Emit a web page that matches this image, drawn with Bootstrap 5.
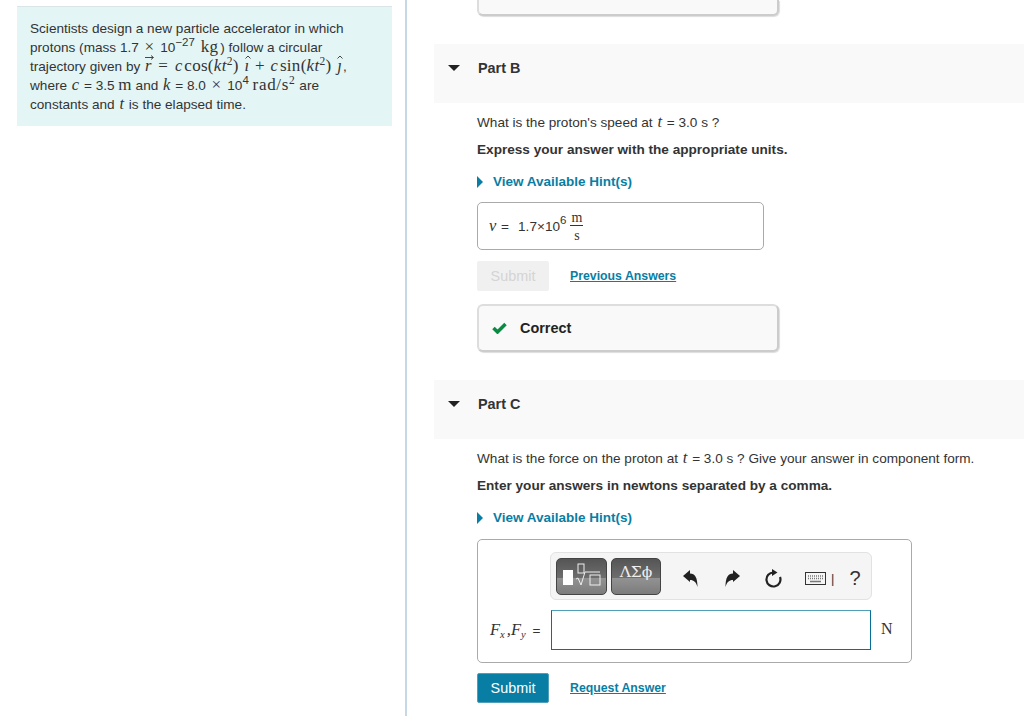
<!doctype html>
<html lang="en">
<head>
<meta charset="utf-8">
<title>Part B and Part C</title>
<link href="https://cdn.jsdelivr.net/npm/bootstrap@5.3.0/dist/css/bootstrap.min.css" rel="stylesheet">
<style>
html,body{height:716px;overflow:hidden}
body{font-family:"Liberation Sans",Arial,sans-serif;font-size:13.6px;line-height:19px;color:#333;background:#fff}
.mth{font-family:"Liberation Serif",serif;font-size:17px;line-height:0;letter-spacing:.3px}
.mi{font-family:"Liberation Serif",serif;font-style:italic;font-size:16.5px;line-height:0;margin:0 1px}
.sup-x{font-size:11.5px;line-height:0;position:relative;top:-6px}
.sub-x{font-size:10.5px;line-height:0;position:relative;top:3px}
.sp-x{margin:0 2px}
.sp-s{margin:0 2px}
.sp-t{margin:0 1px}
.unit-w{letter-spacing:.7px;margin:0}
.shell{height:716px}
.leftcol{width:407px;flex:none;border-right:2px solid #c5d8e8;padding:6px 14px 0 17px}
.intro{background:#e4f5f6;border-top:1px solid #d9e5e6;height:120px;padding:12px 13px;color:#333;width:375px;white-space:nowrap}
.accent-wrap{position:relative;display:inline-block;line-height:0}
.accent-top{position:absolute;left:0;right:0;top:-11px;margin:auto;display:block}
.rightcol{flex:1 1 auto;min-width:0;padding-left:27px}
.feedback{width:302px;background:#f9f9f9;border:2px solid #ddd;border-bottom-color:#ccc;border-right-color:#ccc;box-shadow:1px 1px 1px #ddd;border-radius:6px}
.stub{height:16px;border-top:0;border-top-left-radius:0;border-top-right-radius:0;margin-left:43px}
.parthead{background:#f9f9f9;height:59px;padding:15px 0 0 14px;font-weight:700;font-size:14.4px;color:#333;gap:18px}
.parthead2{margin-top:28px}
.tridown{width:12px;height:6px;flex:none;margin-top:6px}
.partbody{padding-left:43px}
.qtext{margin:10px 0 0;white-space:nowrap}
.qbold{margin:8px 0 0;font-weight:700;white-space:nowrap}
.hintlink{margin-top:13px;gap:10px;color:#087ea4;font-weight:700;font-size:13.5px}
.hintlink svg{flex:none}
.ansbox{width:287px;height:48px;margin-top:11px;border:1px solid #aaa;border-radius:5px;padding:0 10px;gap:9px}
.frac{display:inline-flex;flex-direction:column;align-items:center;font-family:"Liberation Serif",serif;font-size:14px;line-height:11px;margin-left:4px}
.frac b{font-weight:400;border-bottom:1px solid #333;padding:0 1px 2px;display:block}
.frac i{font-style:normal;padding-top:4px;display:block}
.actions{margin-top:11px;gap:21px}
.btn.subbtn{width:72px;height:30px;padding:0;font-size:14.4px;line-height:28px;border-radius:2px;border:1px solid #4f9fba;background:#087ea4;color:#fff;--bs-btn-hover-bg:#087ea4}
.btn.subbtn:disabled{background:#f0f0f0;border-color:#f0f0f0;color:#d4d4d4;opacity:1}
.textlink{color:#087ea4;font-weight:700;font-size:12.3px}
.okbox{height:48px;margin-top:13px;padding:0 13px;gap:13px;font-weight:700;font-size:14.4px;color:#222}
.mqbox{width:435px;height:124px;margin-top:12px;border:1px solid #aaa;border-radius:5px;padding:12px 0 0 11px}
.toolbar{width:322px;height:48px;margin-left:61px;background:#f5f5f5;border:1px solid #e2e2e2;border-radius:6px;padding:0 5px}
.palbtn{height:37px;margin:0;padding:0;border:1px solid #444;border-radius:5px;background:linear-gradient(#555 0,#6e6e6e 55%,#929292 55%,#7c7c7c 100%);color:#eee;display:flex;align-items:center;justify-content:center;flex:none}
.pal1{width:51px;margin-right:4px}
.pal2{width:50px;font-family:"DejaVu Serif",serif;font-size:15.500px;padding-bottom:7px}
.tools{flex:1 1 auto;min-width:0;padding-top:4px}
.tb1{margin-left:22px}.tb2{margin-left:27px}.tb3{margin-left:25px}.tb4{margin-left:23px}
.kbsep{color:#333;font-size:13px;margin-left:5px;line-height:1}
.q-mark{margin-left:15px;font-size:20px;color:#333;line-height:1}
.fieldrow{margin-top:10px;gap:10px}
.fieldlabel{width:52px;flex:none;white-space:nowrap}
.f-gap{margin-right:2px}
.anslot{width:320px;height:40px;border:1px solid #087098;border-top-color:#4f9fba;background:#fff;flex:none;border-radius:0}
.unit-n{font-family:"Liberation Serif",serif;font-size:16px;margin-bottom:3px}
.bottomacts{margin-top:10px;gap:21px}
</style>
</head>
<body>
<div class="shell d-flex">
  <aside class="leftcol">
    <div class="intro">Scientists design a new particle accelerator in which<br>
    protons (mass 1.7 <span class="mth sp-s">&times;</span> 10<span class="sup-x">&minus;27</span> <span class="mth sp-s">kg</span>) follow a circular<br>
    trajectory given by <span class="mi accent-wrap">r<svg class="accent-top" width="9" height="5" viewBox="0 0 9 5"><path d="M0 2.500h8M6 .5l2.500 2L6 4.500" fill="none" stroke="#333" stroke-width=".9"/></svg></span> <span class="mth sp-x">=</span> <span class="mi">c</span><span class="mth sp-t">cos(<i>kt</i><span class="sup-x">2</span>)</span> <span class="mi accent-wrap sp-t">&#305;<svg class="accent-top" width="6" height="4" viewBox="0 0 6 4"><path d="M.5 3.500L3 1l2.500 2.500" fill="none" stroke="#333" stroke-width=".9"/></svg></span> <span class="mth sp-t">+</span> <span class="mi">c</span><span class="mth sp-t">sin(<i>kt</i><span class="sup-x">2</span>)</span> <span class="mi accent-wrap sp-t">&#567;<svg class="accent-top" width="6" height="4" viewBox="0 0 6 4"><path d="M.5 3.500L3 1l2.500 2.500" fill="none" stroke="#333" stroke-width=".9"/></svg></span>,<br>
    where <span class="mi">c</span> = 3.5 <span class="mth">m</span> and <span class="mi">k</span> = 8.0 <span class="mth sp-s">&times;</span> 10<span class="sup-x">4</span> <span class="mth unit-w">rad/s<span class="sup-x">2</span></span> are<br>
    constants and <span class="mi">t</span> is the elapsed time.</div>
  </aside>
  <main class="rightcol">
    <div class="feedback stub"></div>

    <div class="parthead d-flex parthead2">
      <svg class="tridown" viewBox="0 0 12 6"><path d="M0 0h12L6 6z" fill="#222"/></svg>
      <span>Part B</span>
    </div>
    <div class="partbody">
      <p class="qtext">What is the proton's speed at <span class="mi">t</span> = 3.0 s ?</p>
      <p class="qbold">Express your answer with the appropriate units.</p>
      <div class="hintlink d-flex align-items-center">
        <svg width="6" height="12" viewBox="0 0 6 12"><path d="M0 0l6 6-6 6z" fill="#087ea4"/></svg>
        <span>View Available Hint(s)</span>
      </div>
      <div class="ansbox d-flex align-items-center">
        <span class="text-nowrap"><span class="mi">v</span> =</span>
        <span class="d-flex align-items-center text-nowrap">1.7&times;10<span class="sup-x">6</span><span class="frac"><b>m</b><i>s</i></span></span>
      </div>
      <div class="actions d-flex align-items-center">
        <button class="btn subbtn" type="button" disabled>Submit</button>
        <a class="textlink" href="#">Previous Answers</a>
      </div>
      <div class="feedback okbox d-flex align-items-center">
        <svg width="15" height="12" viewBox="0 0 15 12"><path d="M1.500 6l4 4 8-8" fill="none" stroke="#0a8a43" stroke-width="3.500"/></svg>
        <span>Correct</span>
      </div>
    </div>

    <div class="parthead d-flex parthead2">
      <svg class="tridown" viewBox="0 0 12 6"><path d="M0 0h12L6 6z" fill="#222"/></svg>
      <span>Part C</span>
    </div>
    <div class="partbody">
      <p class="qtext">What is the force on the proton at <span class="mi">t</span> = 3.0 s ? Give your answer in component form.</p>
      <p class="qbold">Enter your answers in newtons separated by a comma.</p>
      <div class="hintlink d-flex align-items-center">
        <svg width="6" height="12" viewBox="0 0 6 12"><path d="M0 0l6 6-6 6z" fill="#087ea4"/></svg>
        <span>View Available Hint(s)</span>
      </div>
      <div class="mqbox">
        <div class="toolbar d-flex align-items-center">
          <button class="palbtn pal1" type="button" aria-label="Templates">
            <svg width="49" height="35" viewBox="0 0 49 35"><rect x="6" y="11" width="10" height="15" fill="#fff"/><rect x="21" y="5" width="6" height="9" fill="none" stroke="#eee"/><path d="M19 20l2-1 3 7 4-13h15" fill="none" stroke="#eee"/><rect x="33" y="16" width="10" height="10" fill="none" stroke="#eee"/></svg>
          </button>
          <button class="palbtn pal2" type="button">&Lambda;&Sigma;&#981;</button>
          <div class="tools d-flex align-items-center">
            <svg class="tb1" width="15" height="17" viewBox="0 0 15 17"><path d="M0 6L7 0v3.500c5 0 7.500 4 7.500 13.500-1.500-5-3.500-7-7.500-7V12z" fill="#222"/></svg>
            <svg class="tb2" width="15" height="17" viewBox="0 0 15 17"><path d="M15 6L8 0v3.500C3 3.500.5 7.500.5 17 2 12 4 10 8 10v2z" fill="#222"/></svg>
            <svg class="tb3" width="17" height="19" viewBox="0 0 17 19"><path d="M8.500 3.500a7 7 0 1 0 6.500 4.500" fill="none" stroke="#222" stroke-width="2.200"/><path d="M7 0l5.500 3.500L7 7z" fill="#222"/></svg>
            <svg class="tb4" width="21" height="13" viewBox="0 0 21 13"><rect x=".5" y=".5" width="20" height="12" fill="#f5f5f5" stroke="#333"/><path d="M3 4h15M3 6.500h15" stroke="#777" stroke-width="1.500" stroke-dasharray="1 1"/><path d="M5 9.500h11" stroke="#777" stroke-width="1.500"/></svg>
            <span class="kbsep">|</span>
            <span class="q-mark">?</span>
          </div>
        </div>
        <div class="fieldrow d-flex align-items-center">
          <span class="fieldlabel"><span class="mi">F<span class="sub-x f-gap">x</span>,F<span class="sub-x f-gap">y</span></span> =</span>
          <div class="anslot" role="textbox" aria-label="Answer"></div>
          <span class="unit-n">N</span>
        </div>
      </div>
      <div class="bottomacts d-flex align-items-center">
        <button class="btn subbtn" type="button">Submit</button>
        <a class="textlink" href="#">Request Answer</a>
      </div>
    </div>
  </main>
</div>
</body>
</html>
